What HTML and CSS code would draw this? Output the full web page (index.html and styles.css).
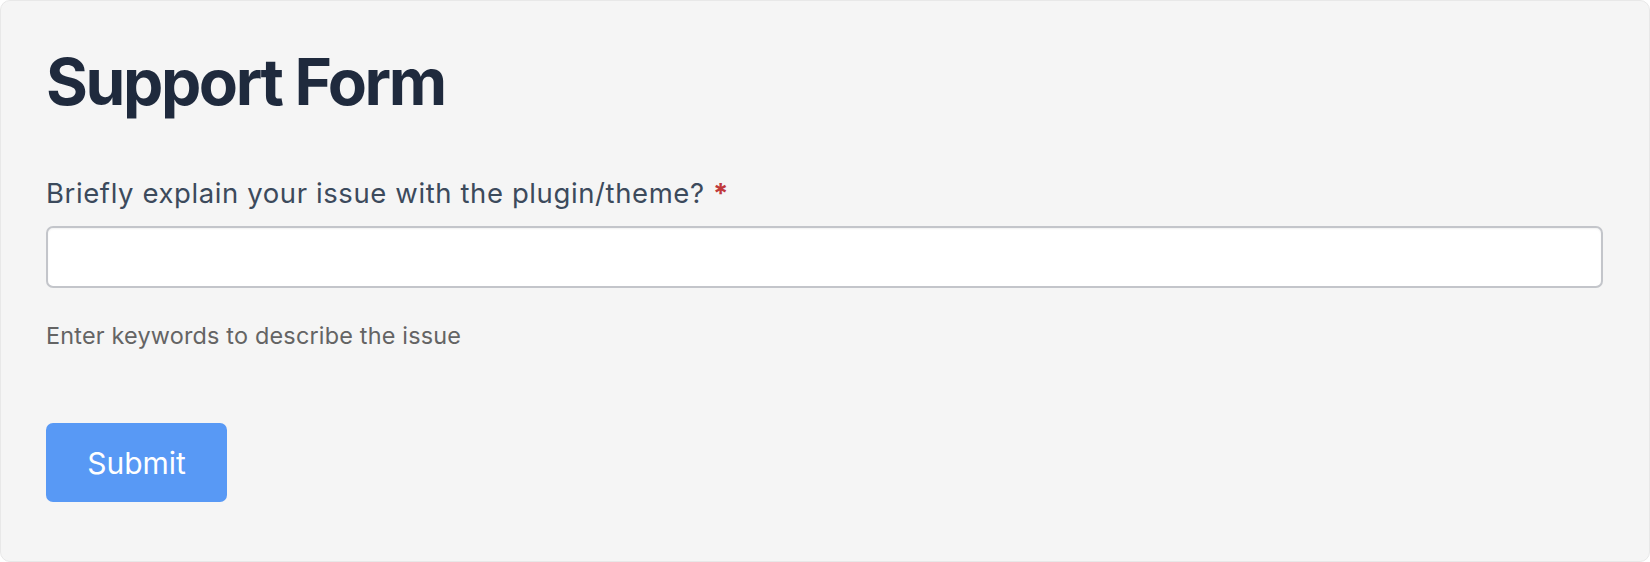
FILE: index.html
```html
<!DOCTYPE html>
<html lang="en">
<head>
<meta charset="utf-8">
<title>Support Form</title>
<link rel="stylesheet" href="styles.css">
</head>
<body>
<main class="card">
  <h1 class="title">Support Form</h1>
  <form class="form">
    <div class="field">
      <label class="label" for="issue">Briefly explain your issue with the plugin/theme? <span class="req">*</span></label>
      <input class="input" id="issue" type="text">
      <p class="help">Enter keywords to describe the issue</p>
    </div>
    <button class="btn" type="button">Submit</button>
  </form>
</main>
</body>
</html>
```

FILE: styles.css
```css
* { box-sizing: border-box; }
html, body { margin: 0; padding: 0; background: #ffffff; }
body { width: 1650px; height: 562px; font-family: Inter, "Noto Sans", sans-serif; }
.card {
  width: 1650px;
  height: 562px;
  background: #f5f5f5;
  border: 1px solid #e8e8e8;
  border-radius: 10px;
  padding: 0 46px 0 45px;
  display: flex;
  flex-direction: column;
}
.title {
  margin: 43px 0 0;
  font-size: 64px;
  line-height: 76px;
  font-weight: 650;
  color: #1f2a3d;
  letter-spacing: -2.4px;
}
.form { display: flex; flex-direction: column; align-items: flex-start; margin-top: 56px; }
.field { display: flex; flex-direction: column; width: 100%; }
.label {
  font-size: 27.5px;
  line-height: 34px;
  color: #3c4a5c;
  letter-spacing: 0.6px;
}
.req { color: #c0393b; font-weight: 700; margin-left: 0; }
.input {
  margin-top: 16px;
  height: 62px;
  width: 100%;
  background: #ffffff;
  border: 2px solid #c3c5ca;
  border-radius: 7px;
  box-shadow: inset 0 1px 2px rgba(0,0,0,0.06);
  font: inherit;
}
.help {
  margin: 33px 0 0;
  font-size: 23.4px;
  line-height: 30px;
  color: #646464;
  letter-spacing: 0.2px;
}
.btn {
  margin-top: 72px;
  width: 181px;
  height: 79px;
  border: none;
  border-radius: 7px;
  background: #5899f5;
  color: #ffffff;
  font-family: Inter, "Noto Sans", sans-serif;
  font-size: 30px;
  padding: 0;
}
```
